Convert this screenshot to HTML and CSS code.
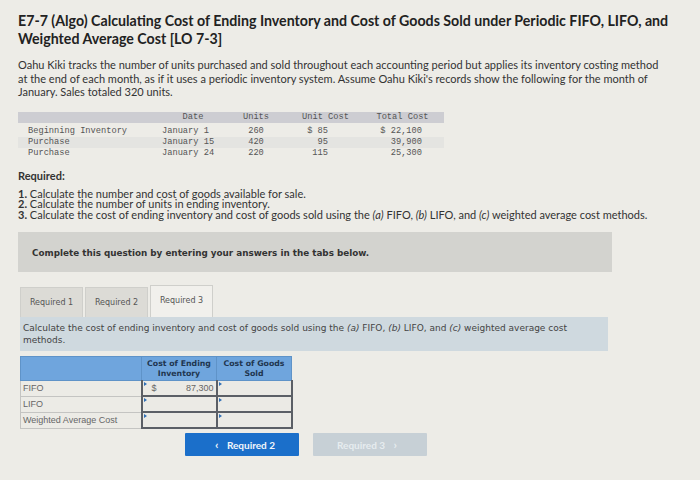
FILE: index.html
```html
<!DOCTYPE html>
<html>
<head>
<meta charset="utf-8">
<link rel="stylesheet" href="styles.css">
</head>
<body>
<div class="page">
  <h1 class="title">E7-7 (Algo) Calculating Cost of Ending Inventory and Cost of Goods Sold under Periodic FIFO, LIFO, and Weighted Average Cost [LO 7-3]</h1>
  <p class="intro">Oahu Kiki tracks the number of units purchased and sold throughout each accounting period but applies its inventory costing method at the end of each month, as if it uses a periodic inventory system. Assume Oahu Kiki's records show the following for the month of January. Sales totaled 320 units.</p>

  <table class="data">
    <thead>
      <tr><th class="c-label"></th><th class="c-date">Date</th><th class="c-units">Units</th><th class="c-cost">Unit Cost</th><th class="c-total">Total Cost</th></tr>
    </thead>
    <tbody>
      <tr><td class="c-label">Beginning Inventory</td><td class="c-date">January 1</td><td class="c-units">260</td><td class="c-cost">$ 85</td><td class="c-total">$ 22,100</td></tr>
      <tr class="alt"><td class="c-label">Purchase</td><td class="c-date">January 15</td><td class="c-units">420</td><td class="c-cost">95</td><td class="c-total">39,900</td></tr>
      <tr><td class="c-label">Purchase</td><td class="c-date">January 24</td><td class="c-units">220</td><td class="c-cost">115</td><td class="c-total">25,300</td></tr>
    </tbody>
  </table>

  <p class="req-head">Required:</p>
  <ol class="req-list">
    <li><b>1.</b> Calculate the number and cost of goods available for sale.</li>
    <li><b>2.</b> Calculate the number of units in ending inventory.</li>
    <li><b>3.</b> Calculate the cost of ending inventory and cost of goods sold using the <i>(a)</i> FIFO, <i>(b)</i> LIFO, and <i>(c)</i> weighted average cost methods.</li>
  </ol>

  <div class="notice">Complete this question by entering your answers in the tabs below.</div>

  <div class="tabs">
    <div class="tab">Required 1</div>
    <div class="tab">Required 2</div>
    <div class="tab active">Required 3</div>
  </div>
  <div class="instr">Calculate the cost of ending inventory and cost of goods sold using the <i>(a)</i> FIFO, <i>(b)</i> LIFO, and <i>(c)</i> weighted average cost methods.</div>

  <table class="answer">
    <thead>
      <tr><th class="a-label"></th><th class="a-col">Cost of Ending Inventory</th><th class="a-col">Cost of Goods Sold</th></tr>
    </thead>
    <tbody>
      <tr><td class="a-label">FIFO</td><td class="a-in"><span class="mark"></span><span class="dollar">$</span><span class="val">87,300</span></td><td class="a-in"><span class="mark"></span></td></tr>
      <tr><td class="a-label">LIFO</td><td class="a-in"><span class="mark"></span></td><td class="a-in"><span class="mark"></span></td></tr>
      <tr><td class="a-label">Weighted Average Cost</td><td class="a-in"><span class="mark"></span></td><td class="a-in"><span class="mark"></span></td></tr>
    </tbody>
  </table>

  <div class="nav">
    <button class="btn prev"><span class="chev">&lsaquo;</span> Required 2</button>
    <button class="btn next">Required 3 <span class="chev">&rsaquo;</span></button>
  </div>
</div>
</body>
</html>
```

FILE: styles.css
```css
html, body {
  margin: 0;
  padding: 0;
  background: #edece7;
}
body {
  font-family: "Lato", "Liberation Sans", sans-serif;
  color: #2a2a2a;
  width: 700px;
  height: 480px;
  overflow: hidden;
}
.page {
  padding: 12px 0 0 18px;
}
.title {
  margin: 0;
  font-size: 14.2px;
  font-weight: 700;
  line-height: 18px;
  width: 670px;
  color: #222;
}
.intro {
  margin: 10px 0 0 0;
  font-size: 11px;
  line-height: 13.5px;
  width: 650px;
  color: #333;
}
.data {
  margin-top: 13px;
  border-collapse: collapse;
  table-layout: fixed;
  font-family: "Liberation Mono", monospace;
  font-size: 8.7px;
  color: #555;
  width: 426px;
}
.data th, .data td {
  box-sizing: border-box;
  padding: 0;
  white-space: nowrap;
}
.data th {
  background: #cdcdd2;
  font-weight: 400;
  height: 11px;
  line-height: 11px;
  text-align: center;
}
.data td {
  height: 11px;
  line-height: 11px;
}
.data tbody tr:first-child td { padding-top: 3px; height: 14px; }
.data tr.alt td { background: #e4e4e1; }
.c-label { width: 142px; }
td.c-label { padding-left: 10px; text-align: left; }
.c-date { width: 66px; }
td.c-date { text-align: left; padding-left: 2px; }
.c-units { width: 60px; }
td.c-units { text-align: center; }
.c-cost { width: 54px; }
th.c-cost { padding-left: 16px; }
td.c-cost { text-align: right; padding-right: 12px; }
.c-total { width: 104px; }
th.c-total { padding-left: 21px; }
td.c-total { text-align: right; padding-right: 22px; }

.req-head {
  margin: 10px 0 0 0;
  font-size: 11px;
  font-weight: 700;
  color: #333;
}
.req-list {
  list-style: none;
  margin: 7px 0 0 0;
  padding: 0;
  font-size: 11px;
  line-height: 10.5px;
  color: #333;
}
.notice {
  margin-top: 12px;
  width: 594px;
  height: 40px;
  box-sizing: border-box;
  background: #d3d3cf;
  padding: 16px 0 0 14px;
  font-family: "DejaVu Sans", sans-serif;
  font-size: 8.8px;
  font-weight: 700;
  color: #333;
}
.tabs {
  display: flex;
  gap: 2px;
  margin: 13px 0 0 2px;
  align-items: flex-end;
}
.tab {
  width: 63px;
  height: 30px;
  box-sizing: border-box;
  background: #dcdbd6;
  border: 1px solid #cfcfcb;
  border-bottom: none;
  font-family: "DejaVu Sans", sans-serif;
  font-size: 8px;
  color: #555;
  text-align: center;
  padding-top: 10px;
}
.tab.active {
  background: #f1f0ec;
  height: 32px;
  padding-top: 10px;
}
.instr {
  margin-left: 2px;
  width: 588px;
  box-sizing: border-box;
  background: #cfd9df;
  padding: 5px 30px 2px 3px;
  height: 34px;
  font-family: "DejaVu Sans", sans-serif;
  font-size: 9px;
  line-height: 12px;
  color: #444;
}
.answer {
  margin: 5px 0 0 2px;
  border-collapse: collapse;
  font-family: "Liberation Sans", sans-serif;
  font-size: 9px;
  color: #666;
}
.answer th {
  background: #6fa5dd;
  color: #1f3650;
  font-family: "DejaVu Sans", sans-serif;
  font-weight: 700;
  font-size: 7.8px;
  line-height: 10px;
  height: 23px;
  padding: 0 3px;
  border: 1px solid #5f93c8;
}
.answer th.a-label { width: 114px; }
.answer th.a-col { width: 68px; }
.answer td {
  height: 14px;
  padding: 0;
  border: 1px solid #8a8a8a;
  background: #ecebe6;
}
.answer td.a-label {
  padding-left: 2px;
  border-color: #c4c4c2;
}
.answer td.a-in {
  position: relative;
  border: 2px solid #5b5f66;
  border-top-width: 1px;
  background: #ebeae5;
}
.mark {
  position: absolute;
  left: 1px;
  top: 1px;
  width: 0;
  height: 0;
  border-top: 2px solid transparent;
  border-bottom: 2px solid transparent;
  border-left: 3px solid #2f6fb5;
}
.dollar {
  position: absolute;
  left: 9px;
  top: 2px;
}
.val {
  position: absolute;
  right: 2px;
  top: 2px;
}
.nav {
  display: flex;
  gap: 14px;
  margin: 4px 0 0 167px;
}
.btn {
  width: 114px;
  height: 23px;
  border: none;
  border-radius: 1px;
  font-family: "Lato", "Liberation Sans", sans-serif;
  font-size: 10px;
  font-weight: 700;
  padding: 0;
}
.btn.prev {
  background: #1b6fca;
  color: #f2f6fb;
}
.btn.next {
  background: #c7d0d6;
  color: #e6ecef;
}
.chev {
  font-size: 12px;
  margin: 0 6px;
}
```
